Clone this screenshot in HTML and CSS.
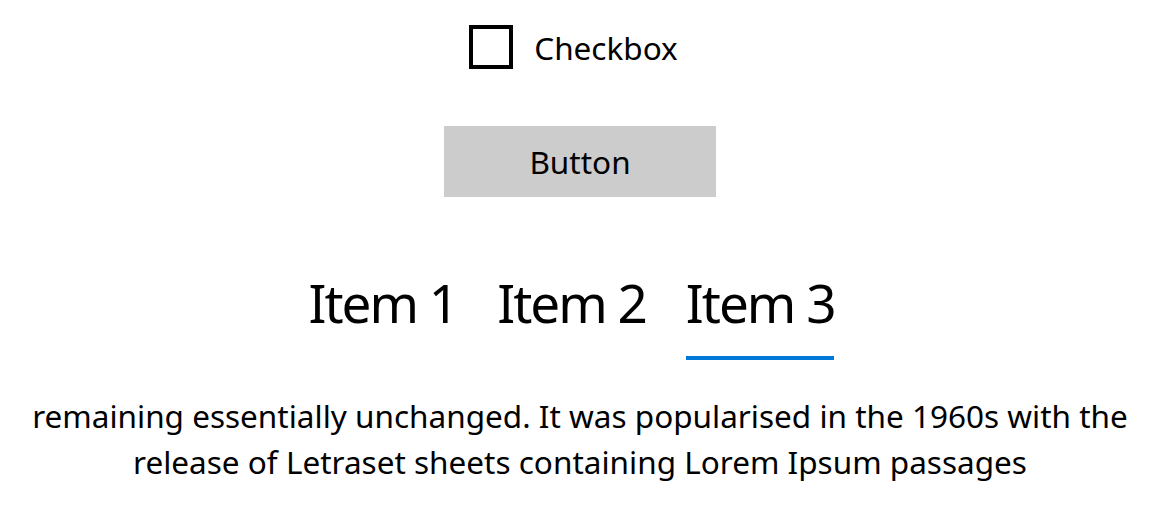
FILE: index.html
```html
<!DOCTYPE html>
<html lang="en">
<head>
    <meta charset="UTF-8">
    <meta name="viewport" content="width=device-width, initial-scale=1.0">
    <title>Controls</title>
    <link rel="stylesheet" href="styles.css">
</head>
<body>
    <div class="page">
        <label class="checkbox">
            <span class="checkbox-box"></span>
            <span class="checkbox-label">Checkbox</span>
        </label>

        <button class="button" type="button">Button</button>

        <div class="pivot">
            <div class="pivot-item">Item 1</div>
            <div class="pivot-item">Item 2</div>
            <div class="pivot-item selected">Item 3</div>
        </div>

        <p class="text">remaining essentially unchanged. It was popularised in the 1960s with the release of Letraset sheets containing Lorem Ipsum passages</p>
    </div>
</body>
</html>
```

FILE: styles.css
```css
body {
    margin: 0;
    background: #fff;
    color: #000;
    font-family: "Noto Sans", "Open Sans", sans-serif;
}
.page {
    width: 1160px;
    display: flex;
    flex-direction: column;
    align-items: center;
    padding-top: 25px;
}
.checkbox {
    display: flex;
    align-items: center;
    gap: 21px;
    padding-right: 13px;
}
.checkbox-box {
    width: 44px;
    height: 44px;
    box-sizing: border-box;
    border: 4px solid #000;
}
.checkbox-label {
    font-size: 31.5px;
}
.button {
    margin-top: 57px;
    width: 272px;
    height: 71px;
    border: none;
    background: #ccc;
    color: #000;
    font-family: inherit;
    font-size: 31.5px;
    padding: 0;
}
.pivot {
    margin-top: 74px;
    display: flex;
    gap: 40px;
    padding-right: 17px;
}
.pivot-item {
    font-size: 53px;
    letter-spacing: -2px;
    line-height: 1.2;
    padding-bottom: 21px;
}
.pivot-item.selected {
    border-bottom: 4.5px solid #0078d7;
}
.text {
    margin: 33px 0 0;
    width: 1120px;
    text-align: center;
    font-size: 31.5px;
    line-height: 46.5px;
}
```
